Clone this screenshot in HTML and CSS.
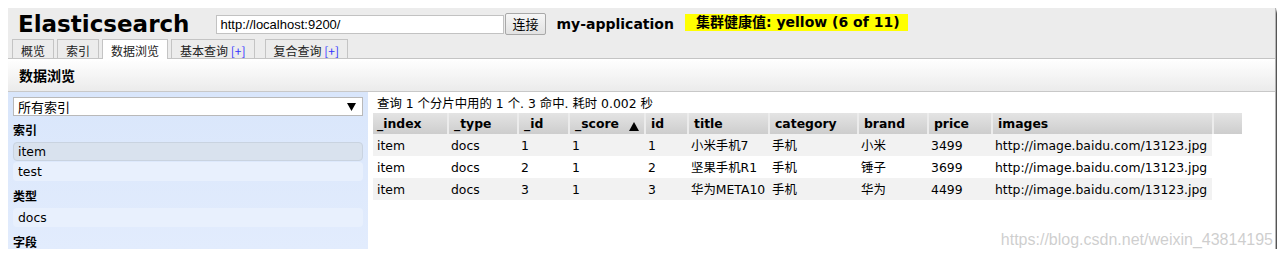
FILE: index.html
```html
<!DOCTYPE html>
<html lang="zh-CN">
<head>
    <meta charset="UTF-8">
    <title>Elasticsearch - 数据浏览</title>
    <link rel="stylesheet" href="styles.css">
</head>
<body>
    <div class="app">
        <header class="top">
            <div class="bar">
                <h1 class="logo">Elasticsearch</h1>
                <input class="url" type="text" value="http://localhost:9200/">
                <button class="connect">连接</button>
                <span class="cluster">my-application</span>
                <span class="health">集群健康值: yellow (6 of 11)</span>
            </div>
            <nav class="tabs">
                <span class="tab">概览</span>
                <span class="tab">索引</span>
                <span class="tab active">数据浏览</span>
                <span class="tab">基本查询 <span class="plus">[+]</span></span>
                <span class="tab tab-wide">复合查询 <span class="plus">[+]</span></span>
            </nav>
        </header>

        <div class="section-title">数据浏览</div>

        <div class="browser">
            <aside class="side">
                <div class="select">
                    <span>所有索引</span>
                    <svg width="9" height="8" viewBox="0 0 9 8"><path d="M0 0h9L4.5 8z" fill="#000"/></svg>
                </div>
                <div class="label">索引</div>
                <div class="item selected">item</div>
                <div class="item">test</div>
                <div class="label">类型</div>
                <div class="item">docs</div>
                <div class="label">字段</div>
            </aside>

            <main class="results">
                <p class="info">查询 1 个分片中用的 1 个. 3 命中. 耗时 0.002 秒</p>
                <table class="grid">
                    <thead>
                        <tr>
                            <th class="c-index">_index</th>
                            <th class="c-type">_type</th>
                            <th class="c-id">_id</th>
                            <th class="c-score">_score <svg class="sort" width="10" height="9" viewBox="0 0 10 9"><path d="M5 0L10 9H0z" fill="#000"/></svg></th>
                            <th class="c-id2">id</th>
                            <th class="c-title">title</th>
                            <th class="c-cat">category</th>
                            <th class="c-brand">brand</th>
                            <th class="c-price">price</th>
                            <th class="c-img">images</th>
                            <th class="c-pad"></th>
                        </tr>
                    </thead>
                    <tbody>
                        <tr>
                            <td>item</td><td>docs</td><td>1</td><td>1</td><td>1</td>
                            <td>小米手机7</td><td>手机</td><td>小米</td><td>3499</td>
                            <td>http://image.baidu.com/13123.jpg</td>
                        </tr>
                        <tr>
                            <td>item</td><td>docs</td><td>2</td><td>1</td><td>2</td>
                            <td>坚果手机R1</td><td>手机</td><td>锤子</td><td>3699</td>
                            <td>http://image.baidu.com/13123.jpg</td>
                        </tr>
                        <tr>
                            <td>item</td><td>docs</td><td>3</td><td>1</td><td>3</td>
                            <td>华为META10</td><td>手机</td><td>华为</td><td>4499</td>
                            <td>http://image.baidu.com/13123.jpg</td>
                        </tr>
                    </tbody>
                </table>
            </main>
        </div>

        <div class="watermark">https://blog.csdn.net/weixin_43814195</div>
    </div>
</body>
</html>
```
FILE: styles.css
```css
body {
    margin: 8px;
    font-family: "DejaVu Sans", "Noto Sans CJK SC", sans-serif;
    font-size: 12.4px;
    color: #000;
    background: #fff;
}

.app {
    position: relative;
    width: 1267px;
    height: 241px;
    display: flex;
    flex-direction: column;
    border-right: 1px solid #b5b5b5;
    box-shadow: 3px 3px 3px rgba(0, 0, 0, 0.7);
}

/* header */
.top {
    background: #ececec;
    border-bottom: 1px solid #c4c4c4;
}

.bar {
    display: flex;
    align-items: center;
    height: 31px;
    padding-left: 10px;
}

.logo {
    margin: 0 27px 0 0;
    font-size: 23px;
    line-height: 28px;
    font-weight: bold;
}

.url {
    width: 288px;
    height: 19px;
    box-sizing: border-box;
    margin: 1px 1px 0 0;
    padding: 0 3px;
    border: 1px solid #c2c2c2;
    font-family: "Liberation Sans", "Noto Sans CJK SC", sans-serif;
    font-size: 13px;
}

.connect {
    height: 22px;
    padding: 0 6px;
    border: 1px solid #a8a8a8;
    border-radius: 2px;
    background: linear-gradient(#f6f6f6, #e2e2e2);
    font-family: "Noto Sans CJK SC", sans-serif;
    font-size: 13px;
    line-height: 18px;
}

.cluster {
    margin-left: 11px;
    font-size: 14px;
    font-weight: bold;
}

.health {
    margin: -2px 0 0 11px;
    padding: 0 8px 0 11px;
    background: #ffff00;
    font-size: 14px;
    font-weight: bold;
    line-height: 17px;
}

.tabs {
    display: flex;
    gap: 3px;
    height: 19px;
    padding-left: 4px;
    align-items: flex-end;
}

.tab {
    height: 18px;
    padding: 0 8px;
    border: 1px solid #c4c4c4;
    border-bottom: none;
    background: #ececec;
    font-family: "Noto Sans CJK SC", sans-serif;
    font-size: 12px;
    line-height: 22px;
    color: #222;
}

.tab.active {
    height: 19px;
    margin-bottom: -1px;
    background: #fff;
}

.tab-wide {
    margin-left: 7px;
}

.plus {
    color: #3333ff;
}

/* page title */
.section-title {
    height: 32px;
    padding-left: 11px;
    border-bottom: 1px solid #c8c8c8;
    background: linear-gradient(#fff, #ebebeb);
    font-family: "Noto Sans CJK SC", sans-serif;
    font-size: 14px;
    font-weight: bold;
    line-height: 32px;
}

.browser {
    flex: 1;
    display: flex;
    min-height: 0;
    overflow: hidden;
}

/* left filter panel */
.side {
    width: 350px;
    padding: 5px;
    background: linear-gradient(#d9e6fb, #e2ecfd);
}

.select {
    display: flex;
    justify-content: space-between;
    align-items: center;
    height: 19px;
    box-sizing: border-box;
    padding: 0 6px 0 4px;
    border: 1px solid #b9b9b9;
    background: #fff;
    font-family: "Liberation Sans", "Noto Sans CJK SC", sans-serif;
    font-size: 13px;
}

.label {
    padding: 6px 0 4px;
    font-family: "Noto Sans CJK SC", sans-serif;
    font-size: 12px;
    font-weight: bold;
    line-height: 16px;
}

.item {
    height: 19px;
    box-sizing: border-box;
    margin-bottom: 1px;
    padding-left: 4px;
    border: 1px solid transparent;
    border-radius: 4px;
    background: #e8f0fd;
    line-height: 17px;
}

.item.selected {
    border-color: #c9d3e0;
    background: #d9e2ee;
}

/* results */
.results {
    flex: 1;
    padding: 4px 0 0 5px;
    background: #fff;
}

.info {
    margin: 0 0 1px;
    padding-left: 4px;
    line-height: 16px;
}

.grid {
    table-layout: fixed;
    border-collapse: separate;
    border-spacing: 0;
    width: 869px;
}

.grid th,
.grid td {
    box-sizing: border-box;
    padding: 0 0 0 5px;
    text-align: left;
    white-space: nowrap;
    overflow: hidden;
}

.grid th {
    height: 21px;
    border-left: 2px solid #ececec;
    background: linear-gradient(#e4e4e4, #cdcdcd);
    font-weight: bold;
}

.grid th:first-child {
    border-left: none;
    padding-left: 4px;
}

.grid td {
    height: 22px;
    padding-left: 4px;
}

.grid tbody tr:nth-child(odd) td {
    background: #f2f2f2;
}

.sort {
    float: right;
    margin: 6px 5px 0 0;
}

.c-index { width: 74px; }
.c-type { width: 70px; }
.c-id { width: 51px; }
.c-score { width: 76px; }
.c-id2 { width: 43px; }
.c-title { width: 81px; }
.c-cat { width: 89px; }
.c-brand { width: 70px; }
.c-price { width: 64px; }
.c-img { width: 221px; }
.c-pad { width: 30px; }

.watermark {
    position: absolute;
    right: 2px;
    bottom: 0;
    font-family: "Liberation Sans", sans-serif;
    font-size: 16px;
    line-height: 19px;
    color: rgba(190, 190, 190, 0.75);
}
```
